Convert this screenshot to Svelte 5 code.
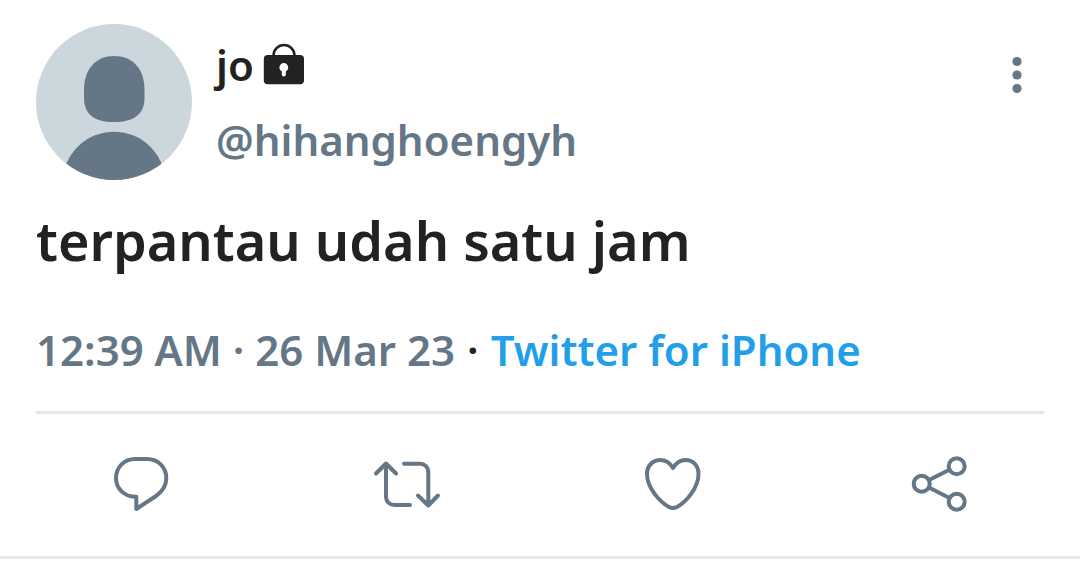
<script lang="ts">
	const tweet = {
		name: 'jo',
		handle: '@hihanghoengyh',
		text: 'terpantau udah satu jam',
		time: '12:39 AM',
		date: '26 Mar 23',
		source: 'Twitter for iPhone'
	};
</script>

<article class="tweet">
	<header>
		<svg class="avatar" viewBox="0 0 156 156" role="img" aria-label="Profile picture">
			<clipPath id="round"><circle cx="78" cy="78" r="78" /></clipPath>
			<circle cx="78" cy="78" r="78" fill="#ccd6dd" />
			<g clip-path="url(#round)" fill="#657786">
				<path d="M78 32C60 32 48 45 48 66V74C48 90 58 98 78 98C98 98 108.500 90 108.500 74V66C108.500 45 97 32 78 32Z" />
				<circle cx="78" cy="159" r="51.300" />
			</g>
		</svg>

		<div class="names">
			<div class="name">
				<span>{tweet.name}</span>
				<svg class="lock" viewBox="0 0 42 44" role="img" aria-label="Protected account">
					<path d="M10.500 14V12.500a10.500 10.500 0 0 1 21 0V14" fill="none" stroke="#222" stroke-width="2.600" />
					<rect x="0.800" y="12" width="40.200" height="29.300" rx="4" fill="#222" />
					<circle cx="20.800" cy="24.500" r="4.400" fill="#fff" />
					<path d="M20.800 25V31.500" stroke="#fff" stroke-width="4" stroke-linecap="round" />
				</svg>
			</div>
			<a class="handle" href="#profile">{tweet.handle}</a>
		</div>

		<button class="more" aria-label="More">
			<svg viewBox="0 0 10 38">
				<circle cx="5" cy="5.500" r="4.600" />
				<circle cx="5" cy="19" r="4.600" />
				<circle cx="5" cy="32.500" r="4.600" />
			</svg>
		</button>
	</header>

	<p class="text">{tweet.text}</p>

	<p class="meta">
		<span>{tweet.time} · {tweet.date}</span>
		<span class="dot">·</span>
		<a href="#source">{tweet.source}</a>
	</p>

	<div class="actions">
		<button aria-label="Reply">
			<svg viewBox="0 0 80 60">
				<path d="M34 5H46C57.500 5 65.300 13.500 65.300 24C65.300 31.500 62 37 55 42L35.300 55V42.800C23 42.800 15 34.500 15 24C15 13.500 23 5 34 5Z" />
			</svg>
		</button>
		<button aria-label="Retweet">
			<svg viewBox="0 0 80 60">
				<path d="M9 19.500L19 9.500L29 19.500M19 9.500V43a8 8 0 0 0 8 8H43" />
				<path d="M37 9.700H53.300a8 8 0 0 1 8 8V51.500M51 41.500L61.300 51.500L71 41.500" />
			</svg>
		</button>
		<button aria-label="Like">
			<svg viewBox="0 0 80 60">
				<path d="M40 14C37 9 33 6 27.500 6C19.500 6 14 12 14 20C14 34 27 48 36 53Q40 55 44 53C53 48 65.500 34 65.500 20C65.500 12 60.500 6 52.500 6C47 6 43 9 40 14Z" />
			</svg>
		</button>
		<button aria-label="Share">
			<svg viewBox="0 0 80 60">
				<circle cx="22.700" cy="29.800" r="8" />
				<circle cx="57.700" cy="12.200" r="8" />
				<circle cx="57.700" cy="47.800" r="8" />
				<path d="M30 26L50.500 15.800M30 33.500L50.500 44" />
			</svg>
		</button>
	</div>
</article>

<style>
	:global(body) {
		margin: 0;
		background: #fff;
	}

	.tweet {
		padding: 24px 36px 0;
		border-bottom: 3px solid #e8e8e8;
		font-family: 'Noto Sans', 'Open Sans', sans-serif;
		font-size: 42px;
		font-weight: 600;
		line-height: 60px;
		color: #222;
	}

	header {
		display: flex;
		align-items: flex-start;
	}

	.avatar {
		flex: none;
		width: 156px;
		height: 156px;
	}

	.names {
		flex: 1;
		display: flex;
		flex-direction: column;
		gap: 15px;
		margin: 11px 0 0 24px;
	}

	.name {
		display: flex;
		align-items: center;
		gap: 9px;
	}

	.lock {
		width: 42px;
		height: 44px;
	}

	.handle {
		color: #657786;
		text-decoration: none;
	}

	button {
		display: flex;
		align-items: center;
		justify-content: center;
		padding: 0;
		border: 0;
		background: none;
		cursor: pointer;
	}

	.more {
		width: 54px;
		height: 54px;
		margin-top: 24px;
	}

	.more svg {
		width: 10px;
		height: 38px;
		fill: #657786;
	}

	.text {
		margin: 23px 0 0;
		font-size: 54px;
		line-height: 74px;
	}

	.meta {
		display: flex;
		flex-wrap: wrap;
		column-gap: 12px;
		margin: 43px 0 0;
		padding-bottom: 31px;
		border-bottom: 3px solid #e8e8e8;
		color: #657786;
	}

	.dot {
		color: #222;
	}

	.meta a {
		color: #239fe9;
		text-decoration: none;
	}

	.actions {
		display: grid;
		grid-template-columns: repeat(4, 1fr);
		margin: 0 -28px;
		padding: 40px 0 42px;
	}

	.actions svg {
		width: 80px;
		height: 60px;
		fill: none;
		stroke: #657786;
		stroke-width: 4;
		stroke-linecap: round;
		stroke-linejoin: round;
	}
</style>
